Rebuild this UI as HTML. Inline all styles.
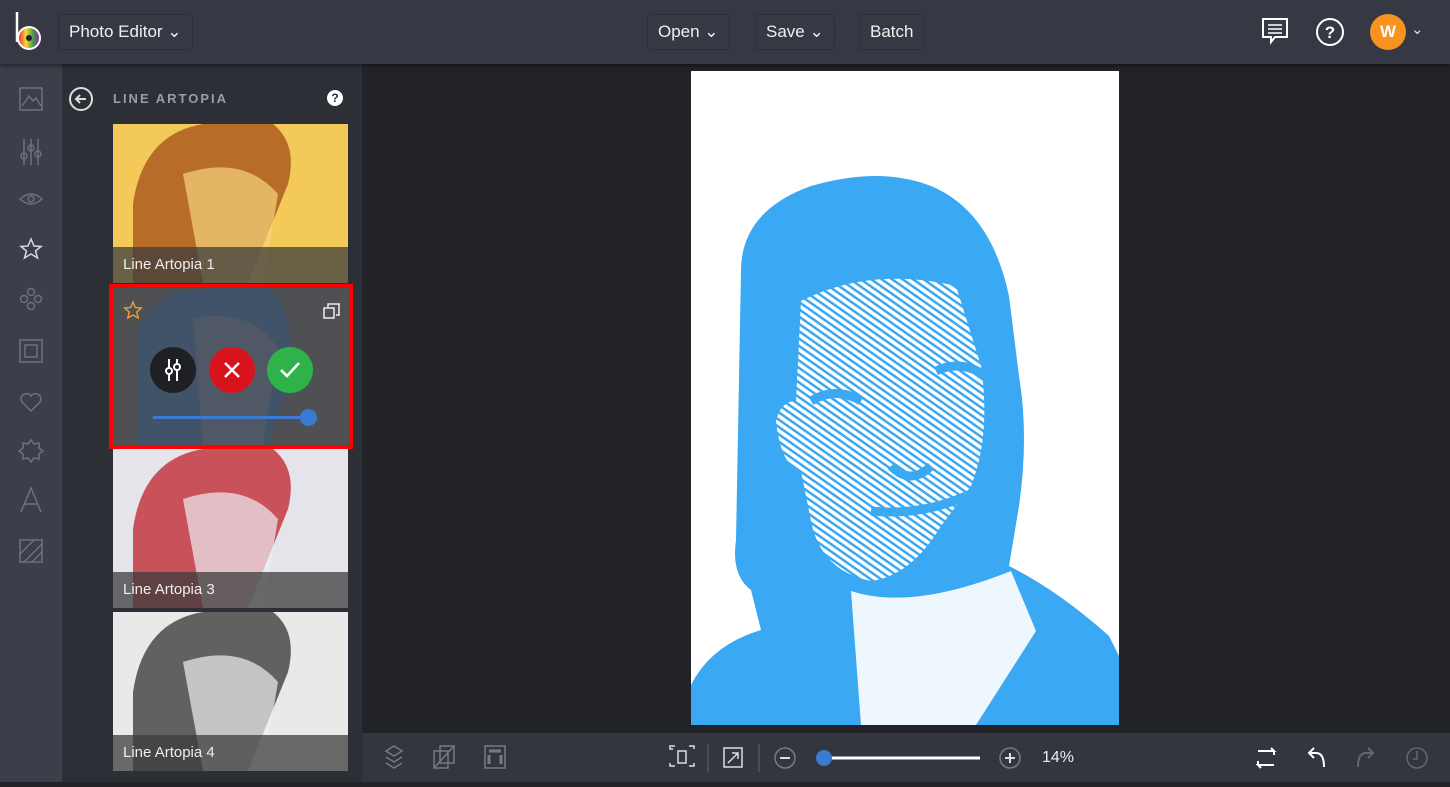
<!DOCTYPE html>
<html><head><meta charset="utf-8"><style>
*{margin:0;padding:0;box-sizing:border-box}
body{width:1450px;height:782px;overflow:hidden;background:#222328;font-family:"Liberation Sans",sans-serif;position:relative}
.top{position:absolute;left:0;top:0;width:1450px;height:64px;background:#363843;box-shadow:0 2px 4px rgba(0,0,0,.4);z-index:2}
.btn{position:absolute;top:14px;height:36px;border:1px solid #2d2f38;border-radius:3px;color:#f0f0f0;font-size:17px;line-height:34px;padding:0 10px}
.left{position:absolute;left:0;top:64px;width:62px;height:718px;background:#3c3e4a}
.panel{position:absolute;left:62px;top:64px;width:300px;height:718px;background:#2d2f37}
.card{position:absolute;left:113px;width:235px;overflow:hidden}
.lbl{position:absolute;left:0;bottom:0;width:100%;height:36px;background:rgba(60,60,60,.75);color:#eee;font-size:15px;line-height:36px;padding-left:10px}
.bottom{position:absolute;left:362px;top:733px;width:1088px;height:49px;background:#34363f}
svg.i{position:absolute}
</style></head><body>
<div class="top">
 <svg class="i" style="left:14px;top:10px" width="32" height="42" viewBox="0 0 32 42"><path d="M3 2v30" stroke="#fff" stroke-width="2.5"/><circle cx="15" cy="28" r="12" fill="#fff"/><circle cx="15" cy="28" r="10" fill="url(#g)"/><circle cx="15" cy="28" r="3" fill="#222"/><defs><linearGradient id="g" x1="0" x2="1"><stop offset="0" stop-color="#e53935"/><stop offset=".35" stop-color="#fdd835"/><stop offset=".7" stop-color="#43a047"/><stop offset="1" stop-color="#8e24aa"/></linearGradient></defs></svg>
 <div class="btn" style="left:58px">Photo Editor ⌄</div>
 <div class="btn" style="left:647px">Open ⌄</div>
 <div class="btn" style="left:755px">Save ⌄</div>
 <div class="btn" style="left:859px">Batch</div>
 <svg class="i" style="left:1260px;top:17px" width="30" height="28"><path d="M3 2h24v18h-12l-4 5v-5H3z" fill="none" stroke="#fff" stroke-width="2"/><path d="M8 8h14M8 12h14M8 16h14" stroke="#fff" stroke-width="1.5"/></svg>
 <svg class="i" style="left:1315px;top:17px" width="30" height="30"><circle cx="15" cy="15" r="13" fill="none" stroke="#fff" stroke-width="2"/><text x="15" y="21" fill="#fff" font-size="17" font-weight="bold" text-anchor="middle" font-family="Liberation Sans">?</text></svg>
 <div style="position:absolute;left:1370px;top:14px;width:36px;height:36px;border-radius:50%;background:#f7931e;color:#fff;font-weight:bold;font-size:17px;text-align:center;line-height:36px">W</div>
 <div style="position:absolute;left:1411px;top:20px;color:#ddd;font-size:15px">⌄</div>
</div>
<div class="left">
 <svg width="62" height="718" fill="none" stroke="#6e7080" stroke-width="1.5">
  <rect x="20" y="24" width="22" height="22"/><path d="M22 42l7-10 4 5 3-3 5 8"/>
  <path d="M24 75v26M31 75v26M38 75v26"/><circle cx="24" cy="92" r="3"/><circle cx="31" cy="84" r="3"/><circle cx="38" cy="90" r="3"/>
  <path d="M20 135q11-10 22 0q-11 10-22 0z"/><circle cx="31" cy="135" r="3"/>
  <path d="M31 175l3 7 7 .5-5.5 4.5 2 7-6.5-4-6.5 4 2-7-5.5-4.5 7-.5z" stroke="#d8d8e0"/>
  <circle cx="31" cy="228" r="3.5"/><circle cx="24" cy="235" r="3.5"/><circle cx="38" cy="235" r="3.5"/><circle cx="31" cy="242" r="3.5"/>
  <rect x="20" y="276" width="22" height="22"/><rect x="25" y="281" width="12" height="12"/>
  <path d="M31 347l-9-9a5 5 0 0 1 9-6a5 5 0 0 1 9 6z"/>
  <path d="M31 376l3 4 5-1 0 5 4 3-4 3 0 5-5-1-3 4-3-4-5 1 0-5-4-3 4-3 0-5 5 1z"/>
  <path d="M21 448l10-24 10 24M24 440h14"/>
  <rect x="20" y="476" width="22" height="22"/><path d="M20 490l14-14M24 498l18-18M32 498l10-10"/>
 </svg>
</div>
<div class="panel">
 <svg class="i" style="left:6px;top:22px" width="26" height="26"><circle cx="13" cy="13" r="11" fill="none" stroke="#ddd" stroke-width="2"/><path d="M18 13H8M12 9l-4 4 4 4" fill="none" stroke="#ddd" stroke-width="2"/></svg>
 <div style="position:absolute;left:51px;top:27px;color:#9a9ca6;font-size:13px;letter-spacing:2px;font-weight:bold">LINE ARTOPIA</div>
 <div style="position:absolute;left:265px;top:26px;width:16px;height:16px;border-radius:50%;background:#fff;color:#2d2f37;font-size:12px;font-weight:bold;text-align:center;line-height:16px">?</div>
</div>
<div class="card" style="top:124px;height:159px;background:#f3c95a">
 <svg width="235" height="159"><path d="M20 159V80q10-70 70-80h70q25 20 15 60l-40 99z" fill="#a8561c" opacity=".8"/><path d="M70 50q60-20 95 20l-15 89h-60z" fill="#f6d57c" opacity=".7"/></svg>
 <div class="lbl">Line Artopia 1</div>
</div>
<div class="card" style="top:284px;height:165px;left:109px;width:244px;border:4px solid #f00;background:#4e5054">
 <svg style="position:absolute;left:0;top:0" width="236" height="157"><path d="M25 157V40q20-40 80-40h50q30 20 20 100l-20 57z" fill="#35557a" opacity=".55"/><path d="M80 30q60-10 85 30l-15 97h-60z" fill="#5a5c60" opacity=".6"/></svg>
 <svg class="i" style="left:10px;top:12px" width="20" height="20"><path d="M10 2l2.3 5.5 6 .5-4.5 4 1.4 6L10 15l-5.2 3 1.4-6L1.7 8l6-.5z" fill="none" stroke="#f0a030" stroke-width="1.4"/></svg>
 <svg class="i" style="left:210px;top:14px" width="18" height="18"><rect x="1" y="6" width="10" height="10" fill="none" stroke="#eee" stroke-width="1.5"/><path d="M5 5V2h11v11h-3" fill="none" stroke="#eee" stroke-width="1.5"/></svg>
 <div style="position:absolute;left:37px;top:59px;width:46px;height:46px;border-radius:50%;background:#1f2024"></div>
 <svg class="i" style="left:50px;top:70px" width="20" height="24" stroke="#fff" stroke-width="2" fill="none"><path d="M6 1v22M14 1v22"/><circle cx="6" cy="13" r="3" fill="#1f2024"/><circle cx="14" cy="9" r="3" fill="#1f2024"/></svg>
 <div style="position:absolute;left:96px;top:59px;width:46px;height:46px;border-radius:50%;background:#d7141e"></div>
 <svg class="i" style="left:109px;top:72px" width="20" height="20"><path d="M3 3l14 14M17 3L3 17" stroke="#fff" stroke-width="2.4"/></svg>
 <div style="position:absolute;left:154px;top:59px;width:46px;height:46px;border-radius:50%;background:#30b24a"></div>
 <svg class="i" style="left:165px;top:70px" width="24" height="24"><path d="M3 12l6 6L21 5" fill="none" stroke="#fff" stroke-width="2.6"/></svg>
 <div style="position:absolute;left:40px;top:128px;width:155px;height:3px;background:#3a7ad0"></div>
 <div style="position:absolute;left:187px;top:121px;width:17px;height:17px;border-radius:50%;background:#3a7ad0"></div>
</div>
<div class="card" style="top:449px;height:159px;background:#e4e4ea">
 <svg width="235" height="159"><path d="M20 159V80q10-70 70-80h70q25 20 15 60l-40 99z" fill="#c0202a" opacity=".75"/><path d="M70 50q60-20 95 20l-15 89h-60z" fill="#eeeef2" opacity=".7"/></svg>
 <div class="lbl">Line Artopia 3</div>
</div>
<div class="card" style="top:612px;height:159px;background:#e9e9e9">
 <svg width="235" height="159"><path d="M20 159V80q10-70 70-80h70q25 20 15 60l-40 99z" fill="#333" opacity=".75"/><path d="M70 50q60-20 95 20l-15 89h-60z" fill="#f0f0f0" opacity=".7"/></svg>
 <div class="lbl">Line Artopia 4</div>
</div>
<svg class="i" style="left:691px;top:71px" width="428" height="654" viewBox="0 0 428 654">
 <defs><pattern id="ln" width="6" height="6" patternUnits="userSpaceOnUse" patternTransform="rotate(35)"><rect width="6" height="6" fill="#fff"/><rect width="6" height="2.5" fill="#3aa8f2"/></pattern></defs>
 <rect width="428" height="654" fill="#fff"/>
 <g fill="#3aa8f2">
  <path d="M50 200q0-60 70-85q70-20 120 0q60 25 78 110l10 80q10 60 0 130l-10 60q50 25 100 70l10 20v69H0v-40q20-40 70-55l-10-40q-20-15-15-50z"/>
 </g>
 <path d="M110 230q70-35 155 -15l25 80q10 70 -10 120l-30 40q-30 50-70 55q-50-10-60-60l-10-50q-20-5-25-50q5-20 20-20z" fill="url(#ln)"/>
 <path d="M160 520q60 20 160-20l25 60l-60 94H170z" fill="#eef7fe"/>
 <path d="M120 330q25-15 50 0M245 300q25-12 50 5M200 395q20 20 40 0M180 440q50 5 95-15" stroke="#3aa8f2" stroke-width="9" fill="none"/>
</svg>
<div class="bottom">
 <svg width="1088" height="49" fill="none" stroke="#777a86" stroke-width="1.5">
  <path d="M24 18l8-5 8 5-8 5zM24 24l8 5 8-5M24 30l8 5 8-5"/>
  <rect x="72" y="18" width="14" height="17"/><rect x="78" y="13" width="14" height="17"/><path d="M72 35l20-22"/>
  <rect x="123" y="13" width="20" height="22"/><path d="M127 18h12M127 22v9M139 22v9" stroke-width="3"/>
  <path d="M311 16h-3v-3h5M327 13h5v3M332 30v3h-5M313 33h-5v-3" stroke="#ddd"/><rect x="316" y="18" width="8" height="12" stroke="#ddd"/>
  <path d="M346 11v28" stroke="#555"/>
  <rect x="362" y="15" width="18" height="19" stroke="#ddd"/><path d="M366 30l10-10M370 20h6v6" stroke="#ddd"/>
  <path d="M397 11v28" stroke="#555"/>
  <circle cx="423" cy="25" r="10"/><path d="M418 25h10" stroke="#ddd" stroke-width="2"/>
  <path d="M462 25h156" stroke="#fff" stroke-width="3"/><circle cx="462" cy="25" r="8" fill="#3a7ad0" stroke="none"/>
  <circle cx="648" cy="25" r="10"/><path d="M643 25h10M648 20v10" stroke="#ddd" stroke-width="2"/>
  <path d="M896 18h16l-3-3M912 18v4M912 32h-16l3 3M896 32v-4" stroke="#fff" stroke-width="2"/>
  <path d="M948 20h6q8 0 8 14M952 15l-5 5 5 5" stroke="#fff" stroke-width="2"/>
  <path d="M1010 20h-6q-8 0-8 14M1006 15l5 5-5 5" stroke="#666" stroke-width="2"/>
  <circle cx="1055" cy="25" r="10" stroke="#666"/><path d="M1055 18v8h-4" stroke="#666"/>
 </svg>
 <div style="position:absolute;left:680px;top:16px;color:#eee;font-size:16px">14%</div>
</div>
</body></html>
